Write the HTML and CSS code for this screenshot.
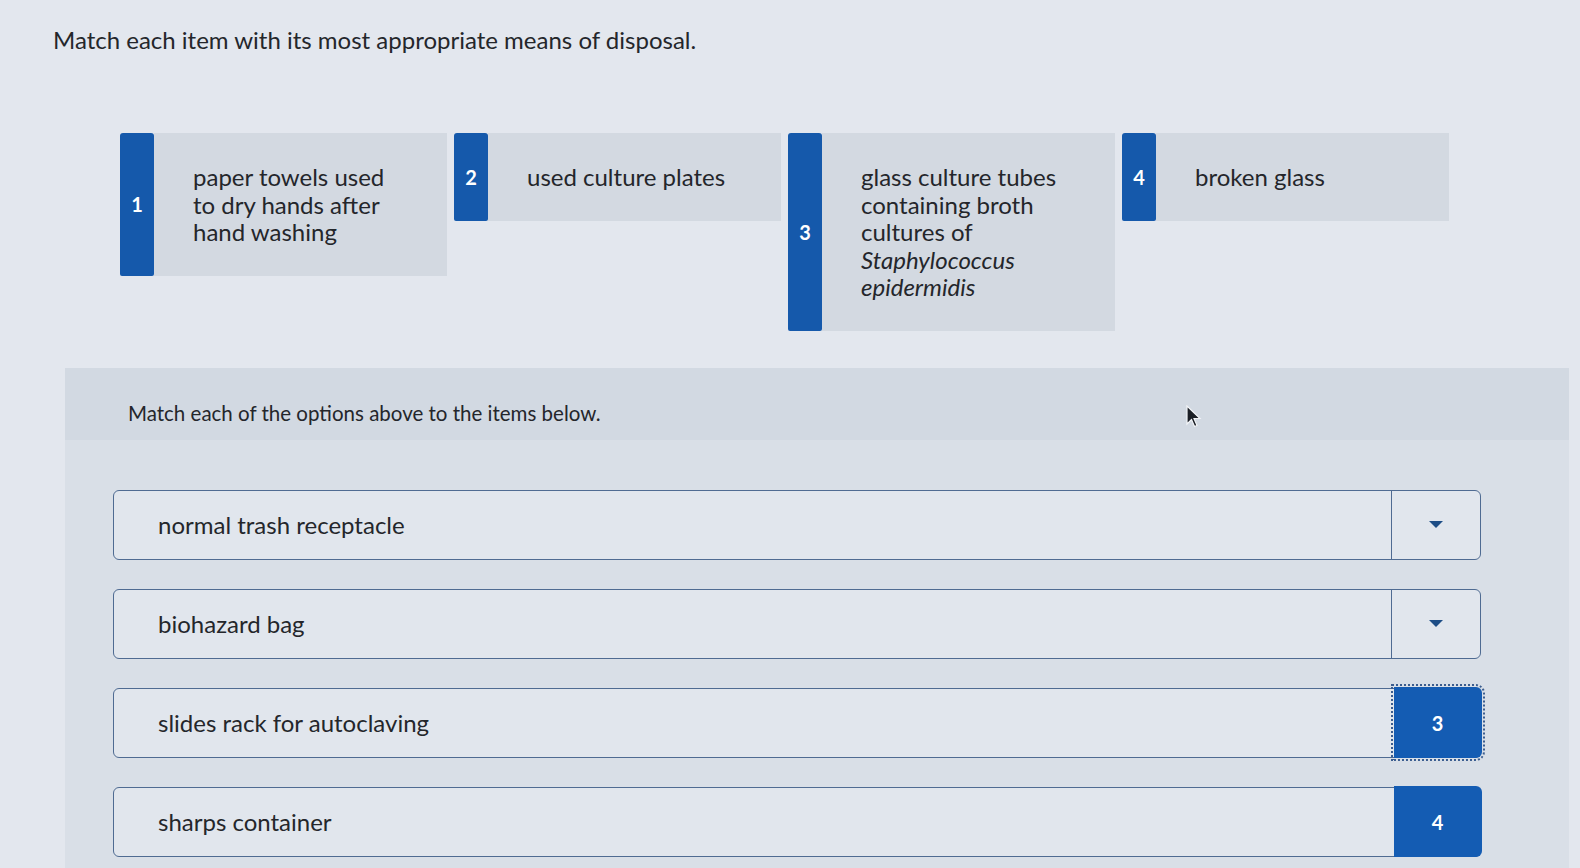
FILE: index.html
```html
<!DOCTYPE html>
<html lang="en">
<head>
  <meta charset="UTF-8" />
  <title>Matching</title>
  <link rel="stylesheet" href="styles.css">
</head>
<body>
  <p class="prompt">Match each item with its most appropriate means of disposal.</p>

  <div class="choices">
    <div class="choice">
      <div class="num">1</div>
      <div class="label">paper towels used to dry hands after hand washing</div>
    </div>
    <div class="choice">
      <div class="num">2</div>
      <div class="label">used culture plates</div>
    </div>
    <div class="choice">
      <div class="num">3</div>
      <div class="label">glass culture tubes containing broth cultures of <em>Staphylococcus epidermidis</em></div>
    </div>
    <div class="choice">
      <div class="num">4</div>
      <div class="label">broken glass</div>
    </div>
  </div>

  <div class="panel">
    <div class="panel-head">Match each of the options above to the items below.</div>

    <div class="rows">
      <div class="row">
        <span class="row-text">normal trash receptacle</span>
        <div class="drop"><span class="caret"></span></div>
      </div>
      <div class="row">
        <span class="row-text">biohazard bag</span>
        <div class="drop"><span class="caret"></span></div>
      </div>
      <div class="row">
        <span class="row-text">slides rack for autoclaving</span>
        <div class="drop filled focused">3</div>
      </div>
      <div class="row">
        <span class="row-text">sharps container</span>
        <div class="drop filled">4</div>
      </div>
    </div>
  </div>

  <!-- mouse pointer -->
  <svg class="pointer" width="16" height="24" viewBox="0 0 16 24">
    <path d="M1 1 L1 19 L5.5 14.5 L8.5 21.5 L11 20.5 L8 13.5 L14 13.5 Z" fill="#1b1f26" stroke="#f2f4f7" stroke-width="1.2"/>
  </svg>
</body>
</html>
```

FILE: styles.css
```css
body {
  margin: 0;
  height: 868px;
  overflow: hidden;
  background: #e3e7ee;
  font-family: Lato, "Open Sans", sans-serif;
  color: #24262b;
}

.prompt {
  margin: 0;
  padding: 25px 0 0 53px;
  font-size: 24px;
  line-height: 29px;
}

.choices {
  display: flex;
  align-items: flex-start;
  gap: 7px;
  margin: 79px 0 0 120px;
}

.choice {
  display: flex;
  align-items: stretch;
}

.num {
  width: 34px;
  display: flex;
  align-items: center;
  justify-content: center;
  background: #1559ab;
  color: #fff;
  font-weight: 700;
  font-size: 20px;
  border-radius: 3px 3px 2px 2px;
}

.label {
  width: 215px;
  padding: 30px 39px;
  background: #d3d9e1;
  font-size: 24px;
  line-height: 27.5px;
}

.panel {
  margin: 37px 0 0 65px;
  width: 1504px;
  height: 500px;
  background: #d9dfe7;
}

.panel-head {
  height: 72px;
  box-sizing: border-box;
  padding: 33px 0 0 63px;
  background: #d2d9e2;
  font-size: 20.5px;
  line-height: 25px;
}

.rows {
  display: flex;
  flex-direction: column;
  gap: 29px;
  padding: 50px 0 0 48px;
}

.row {
  width: 1368px;
  height: 70px;
  box-sizing: border-box;
  display: flex;
  align-items: stretch;
  border: 1.5px solid #4f6b92;
  border-radius: 6px;
  background: #e1e6ed;
}

.row-text {
  flex: 1;
  display: flex;
  align-items: center;
  padding-left: 44px;
  font-size: 24px;
}

.drop {
  width: 88px;
  display: flex;
  align-items: center;
  justify-content: center;
  border-left: 1.5px solid #4f6b92;
}

.caret {
  width: 0;
  height: 0;
  border-left: 7px solid transparent;
  border-right: 7px solid transparent;
  border-top: 7px solid #1d4d86;
}

.drop.filled {
  margin: -1.5px -1.5px -1.5px 0;
  border: none;
  border-radius: 0 6px 6px 0;
  background: #145cb3;
  color: #fff;
  font-weight: 700;
  font-size: 20px;
}

.drop.focused {
  outline: 2px dotted #3b5d8f;
  outline-offset: 1px;
}

.pointer {
  position: absolute;
  left: 1186px;
  top: 405px;
}
```
